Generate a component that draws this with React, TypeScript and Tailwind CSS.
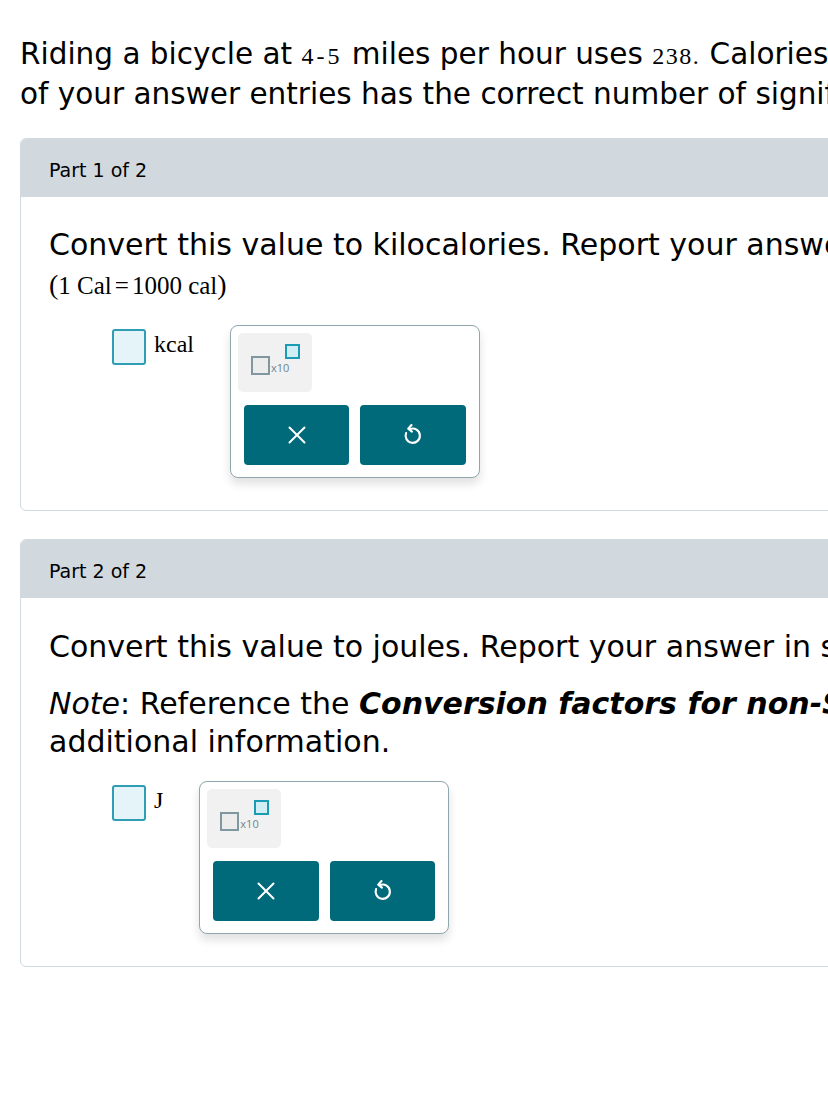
import { X } from 'lucide-react';

const sans = { fontFamily: '"DejaVu Sans", Verdana, sans-serif' };
const serif = { fontFamily: '"Liberation Serif", "Times New Roman", serif' };

function UndoIcon() {
  return (
    <svg width="26" height="26" viewBox="0 0 24 24" fill="none" stroke="white" strokeWidth="2" strokeLinecap="round" strokeLinejoin="round">
      <path d="M9.6 6.4 A6.6 6.6 0 1 1 5.6 10.2" />
      <path d="M10.6 2.8 L7.6 6.2 L11 8.8" />
    </svg>
  );
}

function SciTile() {
  return (
    <div className="relative w-[74px] h-[59px] rounded-[5px] bg-[#f1f1f1]">
      <div className="absolute left-[13px] top-[23px] w-[19px] h-[19px] border-[2.5px] border-[#7f979f] bg-[#ececec]" />
      <span className="absolute left-[33px] top-[29px] text-[11px] leading-none text-[#6d868e]" style={{ fontFamily: '"Open Sans", sans-serif' }}>x10</span>
      <div className="absolute left-[47px] top-[11px] w-[15px] h-[15px] border-[2.5px] border-[#1c9bb4] bg-[#d2eef5]" />
    </div>
  );
}

function Palette() {
  return (
    <div className="w-[250px] rounded-[8px] border border-[#8fa6ae] bg-white shadow-[0_6px_10px_rgba(0,0,0,0.12)] px-[7px] pt-[7px] pb-[12px]">
      <SciTile />
      <div className="flex gap-[11px] px-[6px] mt-[13px]">
        <button className="w-[106px] h-[60px] rounded-[4px] bg-[#006a7a] flex items-center justify-center">
          <X size={30} color="white" strokeWidth={1.6} />
        </button>
        <button className="w-[106px] h-[60px] rounded-[4px] bg-[#006a7a] flex items-center justify-center">
          <UndoIcon />
        </button>
      </div>
    </div>
  );
}

function AnswerRow({ unit }: { unit: string }) {
  return (
    <div className="flex items-start pl-[63px]">
      <div className="flex items-start pt-[4px]">
        <div className="w-[34px] h-[36px] rounded-[3px] border-2 border-[#2f9db3] bg-[#e5f4f8]" />
        <span className="ml-[8px] text-[24px] leading-[30px] text-black" style={serif}>{unit}</span>
      </div>
      <div className="ml-[36px]">
        <Palette />
      </div>
    </div>
  );
}

export default function App() {
  return (
    <div className="w-[828px] h-[1105px] overflow-hidden bg-white text-black" style={sans}>
      <div className="w-[1300px] pl-[20px] pt-[34px]">
        <div className="text-[29.5px] leading-[40px] whitespace-nowrap">
          <div className="h-[40px]">
            Riding a bicycle at <span className="text-[24px] tracking-[3px]" style={serif}>4-5</span> miles per hour uses{' '}
            <span className="text-[24px] tracking-[1.5px]" style={serif}>238.</span> Calories of energy per hour. Make sure each
          </div>
          <div className="h-[40px]">of your answer entries has the correct number of significant digits.</div>
        </div>

        <div className="mt-[24px] w-[1200px] rounded-[6px] border border-[#d1dadf] overflow-hidden">
          <div className="h-[58px] bg-[#d1d9df] flex items-center pl-[28px] pt-[4px] text-[19px]">Part 1 of 2</div>
          <div className="pl-[28px] pt-[28px] pb-[32px]">
            <div className="text-[30px] leading-[40px] whitespace-nowrap">
              Convert this value to kilocalories. Report your answer in scientific notation.
            </div>
            <div className="text-[25px] leading-[30px] mt-[5px]" style={serif}>
              <span className="text-[28px]">(</span>1 Cal<span className="mx-[3px]">=</span>1000 cal<span className="text-[28px]">)</span>
            </div>
            <div className="mt-[24px]">
              <AnswerRow unit="kcal" />
            </div>
          </div>
        </div>

        <div className="mt-[28px] w-[1200px] rounded-[6px] border border-[#d1dadf] overflow-hidden">
          <div className="h-[58px] bg-[#d1d9df] flex items-center pl-[28px] pt-[4px] text-[19px]">Part 2 of 2</div>
          <div className="pl-[28px] pt-[29px] pb-[32px]">
            <div className="text-[30px] leading-[40px] whitespace-nowrap">
              Convert this value to joules. Report your answer in scientific notation.
            </div>
            <div className="text-[30px] leading-[38px] mt-[18px] whitespace-nowrap">
              <i>Note</i>: Reference the <b><i>Conversion factors for non-SI units</i></b> table in the ALEKS Data tab for
              <br />
              additional information.
            </div>
            <div className="mt-[20px]">
              <AnswerRow unit="J" />
            </div>
          </div>
        </div>
      </div>
    </div>
  );
}
